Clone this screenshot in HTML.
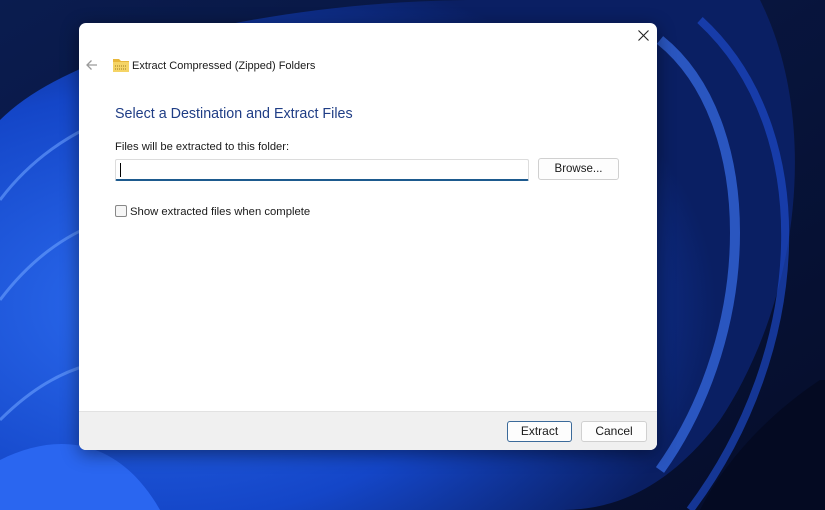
<!DOCTYPE html>
<html><head><meta charset="utf-8"><style>
*{margin:0;padding:0;box-sizing:border-box}
body{width:825px;height:510px;overflow:hidden;position:relative;font-family:"Segoe UI","Liberation Sans",sans-serif;background:#0a1a4a}
#bg{position:absolute;left:0;top:0}
.dlg{position:absolute;left:79px;top:23px;width:578px;height:427px;background:#fff;border-radius:7px;overflow:hidden;box-shadow:0 4px 18px rgba(0,0,0,.45)}
.abs{position:absolute;white-space:nowrap}
.foot{position:absolute;left:0;top:388px;width:578px;height:39px;background:#f0f0f0;border-top:1px solid #e2e2e2}
.btn{position:absolute;height:21px;border:1px solid #d0d0d0;border-radius:3px;background:#fdfdfd;font-size:12px;color:#1a1a1a;text-align:center;line-height:19px}
</style></head><body>
<svg id="bg" width="825" height="510" viewBox="0 0 825 510">
<defs>
<radialGradient id="g1" cx="0.2" cy="0.6" r="0.7"><stop offset="0" stop-color="#2c6cf0"/><stop offset="0.6" stop-color="#1446c8"/><stop offset="1" stop-color="#0a1f63"/></radialGradient>
<linearGradient id="g2" x1="0" y1="0" x2="1" y2="1"><stop offset="0" stop-color="#0a1c4f"/><stop offset="1" stop-color="#050d2a"/></linearGradient>
</defs>
<rect width="825" height="510" fill="url(#g2)"/>
<path d="M0 120 C80 40 300 0 480 0 L760 0 C820 120 800 300 720 420 C660 500 600 510 560 510 L0 510 Z" fill="url(#g1)"/>
<path d="M0 200 C60 120 160 90 250 100 M0 300 C60 220 140 200 200 220 M0 420 C60 360 120 350 170 370" stroke="#6aa0ff" stroke-width="3" fill="none" opacity=".6"/>
<path d="M660 40 C760 120 760 330 660 470" stroke="#3f7bff" stroke-width="10" fill="none" opacity=".6"/>
<path d="M700 20 C820 130 810 350 690 510" stroke="#2050d8" stroke-width="8" fill="none" opacity=".6"/>
<path d="M0 460 C60 430 120 440 160 510 L0 510Z" fill="#2a66f0"/>
<path d="M820 380 C760 420 720 470 700 510 L825 510 L825 380Z" fill="#040a22"/>
</svg>
<div class="dlg">
  <svg class="abs" style="left:559px;top:7px" width="11" height="11" viewBox="0 0 11 11"><path d="M0.5 0.5L10.5 10.5M10.5 0.5L0.5 10.5" stroke="#222" stroke-width="1.1"/></svg>
  <svg class="abs" style="left:6px;top:35px" width="14" height="14" viewBox="0 0 14 14"><path d="M12 7H2M6.5 2.5L2 7l4.5 4.5" stroke="#9a9a9a" stroke-width="1.3" fill="none"/></svg>
  <svg class="abs" style="left:34px;top:35px" width="16" height="14" viewBox="0 0 16 14"><path d="M0 1h6l2 2h8v11H0z" fill="#e8b73a"/><rect x="0" y="4" width="16" height="10" fill="#f5d466"/><path d="M2 8h12M2 11h12" stroke="#9c7a20" stroke-width="1" stroke-dasharray="1 1"/></svg>
  <div class="abs" style="left:53px;top:37px;font-size:11px;color:#1a1a1a">Extract Compressed (Zipped) Folders</div>
  <div class="abs" style="left:36px;top:83px;font-size:14.3px;color:#1f3d85">Select a Destination and Extract Files</div>
  <div class="abs" style="left:36px;top:118px;font-size:11.2px;color:#1a1a1a">Files will be extracted to this folder:</div>
  <div class="abs" style="left:36px;top:136px;width:414px;height:22px;border:1px solid #dcdcdc;border-bottom:2px solid #1d5a8e;border-radius:2px"></div>
  <div class="abs" style="left:41px;top:140px;width:1px;height:14px;background:#000"></div>
  <div class="btn" style="left:459px;top:135px;width:81px;height:22px;line-height:20px;font-size:11.5px">Browse...</div>
  <div class="abs" style="left:36px;top:182px;width:12px;height:12px;border:1px solid #888;border-radius:2px;background:#f6f6f6"></div>
  <div class="abs" style="left:51px;top:183px;font-size:11.3px;color:#1a1a1a">Show extracted files when complete</div>
  <div class="foot"></div>
  <div class="btn" style="left:428px;top:398px;width:65px;border:1px solid #3b6a9a">Extract</div>
  <div class="btn" style="left:502px;top:398px;width:66px">Cancel</div>
</div>
</body></html>
